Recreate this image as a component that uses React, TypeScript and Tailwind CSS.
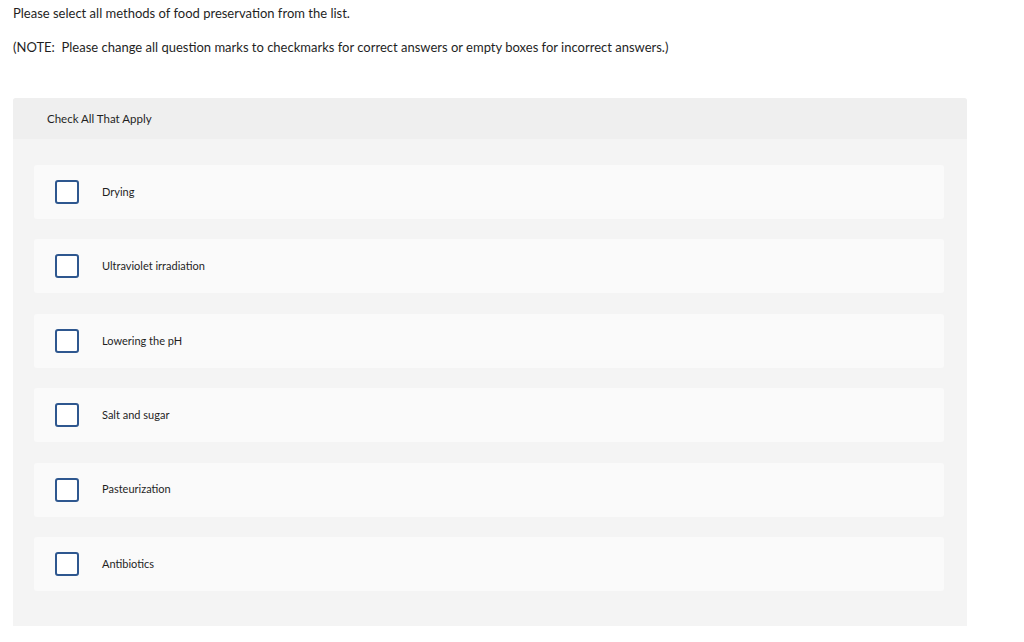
const options = [
  'Drying',
  'Ultraviolet irradiation',
  'Lowering the pH',
  'Salt and sugar',
  'Pasteurization',
  'Antibiotics',
]

export default function App() {
  return (
    <div className="min-h-[642px] bg-white font-['Lato',sans-serif] text-[#1f1f1f]">
      <div className="px-[13px] pt-[5px]">
        <p className="text-[13px] leading-[16px]">Please select all methods of food preservation from the list.</p>
        <p className="mt-[18px] text-[13px] leading-[16px]">
          (NOTE:&nbsp; Please change all question marks to checkmarks for correct answers or empty boxes for incorrect answers.)
        </p>

        <div className="mt-[43px] w-[954px] rounded-t-[3px] bg-[#f4f4f4]">
          <div className="flex h-[41px] items-center rounded-t-[3px] bg-[#efefef] pl-[34px] text-[11.5px]">
            Check All That Apply
          </div>
          <div className="flex flex-col gap-[20.4px] pl-[21px] pr-[23px] pt-[26px] pb-[35px]">
            {options.map((o) => (
              <label key={o} className="flex h-[54px] items-center rounded-[3px] bg-[#fafafa] pl-[21px]">
                <span className="h-[24px] w-[24px] rounded-[3px] border-2 border-[#2e578f] bg-white" />
                <span className="ml-[23px] text-[11px]">{o}</span>
              </label>
            ))}
          </div>
        </div>
      </div>
    </div>
  )
}
